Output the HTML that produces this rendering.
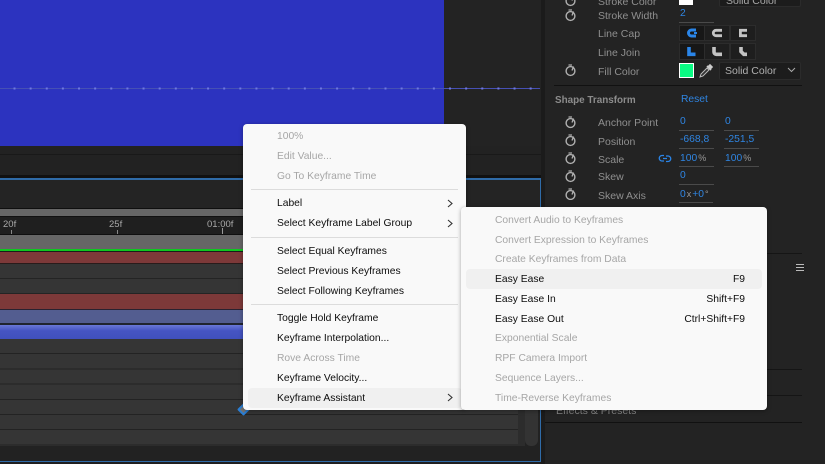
<!DOCTYPE html>
<html><head><meta charset="utf-8">
<style>
html,body{margin:0;padding:0;background:#232323;}
#p{position:relative;width:825px;height:464px;overflow:hidden;background:#232323;font-family:"Liberation Sans",sans-serif;}
#p div{position:absolute;}
.r{left:0;width:541px;}
.t{color:#8f8f8f;font-size:10.5px;line-height:14px;white-space:nowrap;margin-top:1px;}
.v{color:#2f85e2;font-size:10.3px;line-height:14px;white-space:nowrap;margin-top:1px;}
.v span{color:#999;font-size:9px;margin:0 1px;}
.u{height:1px;background:#4a4a4a;}
.menu{background:#f9f9f9;border-radius:4px;box-shadow:0 1px 4px rgba(0,0,0,.35);}
.i{font-size:10.3px;line-height:14px;color:#0c0c0c;white-space:nowrap;margin-top:1px;}
#p .d{color:#a6a6a6;}
.sep{height:1px;background:#dcdcdc;}
.b{background:#1e1e1e;border:1px solid #2c2c2c;box-sizing:border-box;width:26px;}
</style></head><body>
<div id="p">
<svg width="0" height="0" style="position:absolute"><defs>
<g id="sw"><circle cx="6.5" cy="8" r="4.4" fill="none" stroke="#b0b0b0" stroke-width="1.4"/><path d="M4.5 2L8 2M8 7.5L9.5 3.5" stroke="#b0b0b0" stroke-width="1.3" fill="none"/></g>
<g id="chev"><path d="M1 1L5 4.5L1 8" fill="none" stroke="#333" stroke-width="1.1"/></g>
</defs></svg>

<div style="left:0;top:0;width:444px;height:146px;background:#2c33bf"></div>
<svg style="position:absolute;left:0;top:85px" width="541" height="6">
<line x1="0" y1="3.5" x2="540" y2="3.5" stroke="#4650b4" stroke-width="1"/>
<line x1="0" y1="3.5" x2="5000" y2="3.5" stroke="#6f78e0" stroke-width="2" stroke-dasharray="2 14.13" stroke-dashoffset="-13.5"/>
</svg>

<div class="r" style="top:146px;height:34px;background:#222"></div>
<div class="r" style="top:154px;height:1px;background:#191919"></div>
<div class="r" style="top:175px;height:3px;background:#111"></div>
<div class="r" style="top:178px;height:2px;background:#2f6ba8"></div>
<div class="r" style="top:180px;height:29px;background:#242424"></div>
<div class="r" style="top:208px;height:1px;background:#0f0f0f"></div>
<div class="r" style="top:209px;height:7px;background:#666"></div>
<div class="r" style="top:216px;height:18px;background:#1f1f1f;border-top:1px solid #111;box-sizing:border-box"></div>
<div style="left:3px;top:218px;font-size:9.5px;line-height:13px;color:#a9a9a9">20f</div>
<div style="left:109px;top:218px;font-size:9.5px;line-height:13px;color:#a9a9a9">25f</div>
<div style="left:207px;top:218px;font-size:9.5px;line-height:13px;color:#a9a9a9">01:00f</div>
<div style="left:11px;top:230px;width:1px;height:4px;background:#888"></div>
<div style="left:117px;top:230px;width:1px;height:4px;background:#888"></div>
<div style="left:222px;top:228px;width:1px;height:6px;background:#999"></div>
<div class="r" style="top:234px;height:1px;background:#0f0f0f"></div>
<div class="r" style="top:235px;height:14px;background:#666"></div>
<div class="r" style="top:249px;height:2px;background:#0fc71f"></div>
<div class="r" style="top:251px;height:1px;background:#1b1b1b"></div>
<div class="r" style="top:252px;height:11px;background:#7d3939"></div>
<div class="r" style="top:263px;height:1px;background:#2a1b1b"></div>
<div class="r" style="top:264px;height:14px;background:#353535"></div>
<div class="r" style="top:278px;height:1px;background:#242424"></div>
<div class="r" style="top:279px;height:14px;background:#353535"></div>
<div class="r" style="top:293px;height:1px;background:#242424"></div>
<div class="r" style="top:294px;height:15px;background:#7d3939"></div>
<div class="r" style="top:309px;height:1px;background:#2a2230"></div>
<div class="r" style="top:310px;height:13px;background:#535d90"></div>
<div class="r" style="top:323px;height:2px;background:#20242f"></div>
<div class="r" style="top:325px;height:14px;background:linear-gradient(#6a78d8,#4655c3 40%,#4050bd)"></div>
<div class="r" style="top:339px;height:107px;background:repeating-linear-gradient(#353535 0,#353535 14.2px,#232323 14.2px,#232323 15.2px)"></div>
<div class="r" style="top:446px;height:15px;background:#222"></div>
<div style="left:518px;top:339px;width:7px;height:107px;background:#2c2c2c"></div>
<div style="left:525px;top:339px;width:16px;height:122px;background:#222"></div>
<div style="left:525px;top:400px;width:13px;height:46px;background:#333;border-radius:0 0 6px 6px"></div>
<div style="left:0;top:461px;width:541px;height:1px;background:#2f6ba8"></div>
<div style="left:0;top:462px;width:541px;height:2px;background:#1f1f1f"></div>
<div style="left:540px;top:179px;width:1px;height:283px;background:#2f6ba8"></div>
<div style="left:541px;top:0;width:4px;height:464px;background:#1b1b1b"></div>

<!-- right panel -->
<div style="left:545px;top:0;width:280px;height:464px;background:#232323"></div>
<svg style="position:absolute;left:564px;top:0" width="14" height="200">
<use href="#sw" y="-7"/><use href="#sw" y="8"/><use href="#sw" y="63"/>
<use href="#sw" y="115"/><use href="#sw" y="133"/><use href="#sw" y="151"/><use href="#sw" y="169"/><use href="#sw" y="187"/>
</svg>
<div class="t" style="left:598px;top:-6px">Stroke Color</div>
<div style="left:679px;top:-8px;width:14px;height:13px;background:#fff"></div>
<div style="left:719px;top:-6px;width:80px;height:11px;background:#1c1c1c;border:1px solid #2b2b2b;border-radius:2px"></div>
<div class="t" style="left:726px;top:-7px;color:#a8a8a8">Solid Color</div>
<div class="t" style="left:598px;top:8px">Stroke Width</div>
<div class="v" style="left:680px;top:6px">2</div>
<div class="u" style="left:679px;top:22px;width:35px"></div>
<div class="t" style="left:598px;top:26px">Line Cap</div>
<div class="t" style="left:598px;top:45px">Line Join</div>
<div class="t" style="left:598px;top:64px">Fill Color</div>

<div class="b" style="left:679px;top:25px;height:16px;background:#171717"></div><div class="b" style="left:704px;top:25px;height:16px"></div><div class="b" style="left:730px;top:25px;height:16px"></div>
<div class="b" style="left:679px;top:43px;height:17px;background:#171717"></div><div class="b" style="left:704px;top:43px;height:17px"></div><div class="b" style="left:730px;top:43px;height:17px"></div>
<svg style="position:absolute;left:679px;top:25px" width="78" height="36">
<g fill="none">
<path d="M17 5H12.5A2.9 2.9 0 0 0 12.5 11H17" stroke="#2a85e8" stroke-width="3"/>
<rect x="15" y="7" width="3" height="2" fill="#2a85e8"/>
<path d="M43 5.3H37A2.7 2.7 0 0 0 37 10.7H43" stroke="#c4c4c4" stroke-width="2.8"/>
<path d="M68 5.3H61.4V10.7H68" stroke="#c4c4c4" stroke-width="2.8"/>
<path d="M10 22V29.3H16.5" stroke="#2a85e8" stroke-width="3.6"/>
<path d="M35 22V27A2.3 2.3 0 0 0 37.3 29.3H43" stroke="#c4c4c4" stroke-width="3.6"/>
<path d="M62 22V26.5L64.8 29.3H68" stroke="#c4c4c4" stroke-width="3.6"/>
</g></svg>

<div style="left:679px;top:63px;width:15px;height:15px;box-sizing:border-box;border:1px solid #fff;background:#0afc84"></div>
<svg style="position:absolute;left:698px;top:63px" width="16" height="16"><path d="M2 14L3 11L9 5L11 7L5 13Z" fill="#333" stroke="#bbb"/><path d="M9 3L13 7M10 4L12 2L14 4L12 6" stroke="#ccc" stroke-width="1.6" fill="#ccc"/></svg>
<div style="left:719px;top:62px;width:80px;height:16px;background:#1c1c1c;border:1px solid #2b2b2b;border-radius:2px;box-sizing:content-box"></div>
<div class="t" style="left:725px;top:63px;color:#b0b0b0">Solid Color</div>
<svg style="position:absolute;left:787px;top:67px" width="10" height="7"><path d="M1 1L4.5 4.5L8 1" fill="none" stroke="#aaa"/></svg>

<div style="left:554px;top:85px;width:248px;height:1px;background:#111"></div>
<div class="t" style="left:555px;top:93px;font-weight:bold;color:#8c8c8c;font-size:9.9px">Shape Transform</div>
<div class="v" style="left:681px;top:92px">Reset</div>

<div class="t" style="left:598px;top:115px">Anchor Point</div>
<div class="v" style="left:680px;top:114px">0</div><div class="v" style="left:725px;top:114px">0</div>
<div class="u" style="left:679px;top:130px;width:35px"></div><div class="u" style="left:724px;top:130px;width:35px"></div>
<div class="t" style="left:598px;top:134px">Position</div>
<div class="v" style="left:680px;top:132px">-668,8</div><div class="v" style="left:725px;top:132px">-251,5</div>
<div class="u" style="left:679px;top:148px;width:35px"></div><div class="u" style="left:724px;top:148px;width:35px"></div>
<div class="t" style="left:598px;top:152px">Scale</div>
<svg style="position:absolute;left:658px;top:154px" width="14" height="9"><path d="M6 1.5H4A2.7 2.7 0 0 0 4 7H6M8 2H10A2.7 2.7 0 0 1 10 7.5H8M5 4.5H9" fill="none" stroke="#2a85e8" stroke-width="1.3"/></svg>
<div class="v" style="left:680px;top:150px">100<span>%</span></div><div class="v" style="left:725px;top:150px">100<span>%</span></div>
<div class="u" style="left:679px;top:166px;width:35px"></div><div class="u" style="left:724px;top:166px;width:35px"></div>
<div class="t" style="left:598px;top:169px">Skew</div>
<div class="v" style="left:680px;top:168px">0</div>
<div class="u" style="left:679px;top:184px;width:35px"></div>
<div class="t" style="left:598px;top:188px">Skew Axis</div>
<div class="v" style="left:680px;top:186px">0<span>x</span>+0<span>°</span></div>
<div class="u" style="left:679px;top:202px;width:34px"></div>

<div style="left:545px;top:253px;width:257px;height:1px;background:#151515"></div>
<div style="left:796px;top:264px;width:8px;height:1px;background:#bbb"></div>
<div style="left:796px;top:267px;width:8px;height:1px;background:#bbb"></div>
<div style="left:796px;top:270px;width:8px;height:1px;background:#bbb"></div>
<div style="left:545px;top:369px;width:257px;height:1px;background:#151515"></div>
<div style="left:545px;top:395px;width:257px;height:1px;background:#151515"></div>
<div class="t" style="left:556px;top:403px;color:#858585">Effects &amp; Presets</div>
<div style="left:545px;top:422px;width:257px;height:1px;background:#111"></div>

<!-- keyframe -->
<div style="left:238.5px;top:405px;width:5px;height:5px;background:#777;border:2px solid #2a7fd6;transform:rotate(45deg);border-radius:1px"></div>

<!-- menu 1 -->
<div class="menu" style="left:243px;top:124px;width:223px;height:286px"></div>
<div style="left:248px;top:388px;width:214px;height:20px;background:#f0f0f0;border-radius:4px"></div>
<div class="i d" style="left:277px;top:129px">100%</div>
<div class="i d" style="left:277px;top:149px">Edit Value...</div>
<div class="i d" style="left:277px;top:169px">Go To Keyframe Time</div>
<div class="sep" style="left:251px;top:189px;width:207px"></div>
<div class="i" style="left:277px;top:196px">Label</div>
<div class="i" style="left:277px;top:216px">Select Keyframe Label Group</div>
<div class="sep" style="left:251px;top:237px;width:207px"></div>
<div class="i" style="left:277px;top:244px">Select Equal Keyframes</div>
<div class="i" style="left:277px;top:264px">Select Previous Keyframes</div>
<div class="i" style="left:277px;top:284px">Select Following Keyframes</div>
<div class="sep" style="left:251px;top:304px;width:207px"></div>
<div class="i" style="left:277px;top:311px">Toggle Hold Keyframe</div>
<div class="i" style="left:277px;top:331px">Keyframe Interpolation...</div>
<div class="i d" style="left:277px;top:351px">Rove Across Time</div>
<div class="i" style="left:277px;top:371px">Keyframe Velocity...</div>
<div class="i" style="left:277px;top:391px">Keyframe Assistant</div>
<svg style="position:absolute;left:447px;top:199px" width="7" height="10"><use href="#chev"/></svg>
<svg style="position:absolute;left:447px;top:219px" width="7" height="10"><use href="#chev"/></svg>
<svg style="position:absolute;left:447px;top:393px" width="7" height="10"><use href="#chev"/></svg>

<!-- menu 2 -->
<div class="menu" style="left:461px;top:207px;width:306px;height:203px"></div>
<div style="left:466px;top:269px;width:296px;height:20px;background:#f0f0f0;border-radius:4px"></div>
<div class="i d" style="left:495px;top:213px">Convert Audio to Keyframes</div>
<div class="i d" style="left:495px;top:233px">Convert Expression to Keyframes</div>
<div class="i d" style="left:495px;top:252px">Create Keyframes from Data</div>
<div class="i" style="left:495px;top:272px">Easy Ease</div>
<div class="i" style="left:495px;top:292px">Easy Ease In</div>
<div class="i" style="left:495px;top:312px">Easy Ease Out</div>
<div class="i d" style="left:495px;top:331px">Exponential Scale</div>
<div class="i d" style="left:495px;top:351px">RPF Camera Import</div>
<div class="i d" style="left:495px;top:371px">Sequence Layers...</div>
<div class="i d" style="left:495px;top:391px">Time-Reverse Keyframes</div>
<div class="i" style="right:80px;top:272px">F9</div>
<div class="i" style="right:80px;top:292px">Shift+F9</div>
<div class="i" style="right:80px;top:312px">Ctrl+Shift+F9</div>
</div>
</body></html>
